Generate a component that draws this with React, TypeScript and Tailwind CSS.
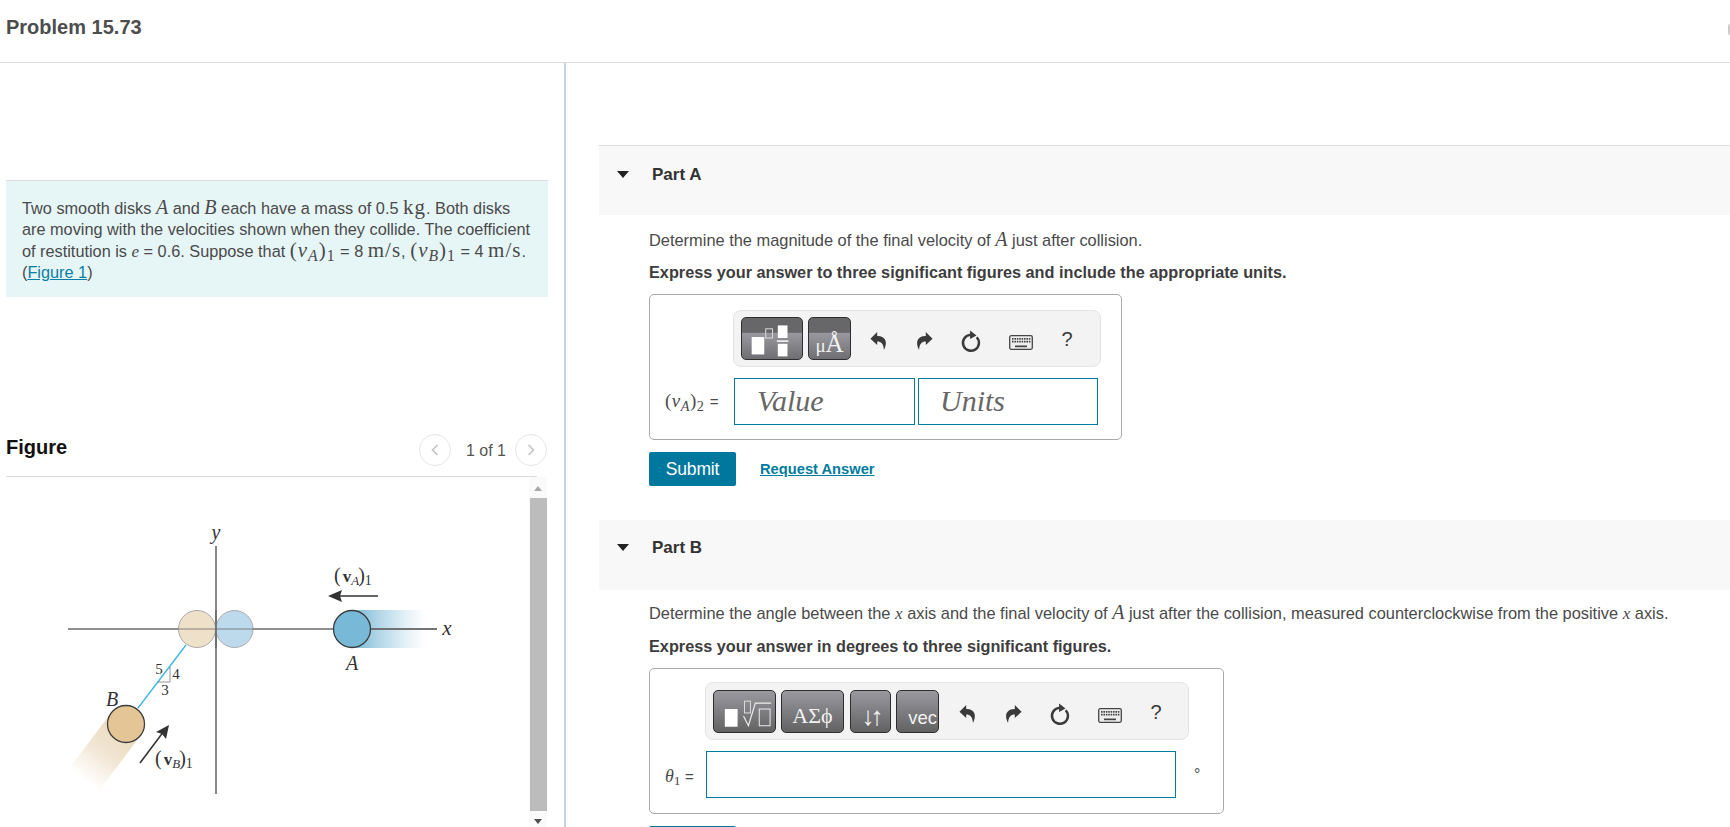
import React from "react";

const serif = "font-['Liberation_Serif',serif]";

function Undo({ flip = false }: { flip?: boolean }) {
  return (
    <svg viewBox="0 0 20 22" className={`w-[18px] h-[20px] ${flip ? "-scale-x-100" : ""}`}>
      <path d="M8 1 L0.5 8.5 L8 15.5 V11.5 C12.5 11.5 15 14 15.5 21 C19.5 14 18.5 5.5 8 5.5 Z" fill="#3a3a3a" />
    </svg>
  );
}

function Reset() {
  return (
    <svg viewBox="0 0 24 26" className="w-[22px] h-[24px]">
      <path d="M11 6.3 A8.7 8.7 0 1 0 18.2 8.9" fill="none" stroke="#3a3a3a" strokeWidth="2.7" />
      <path d="M11 1.5 L18 7 L11 10.8 Z" fill="#3a3a3a" />
    </svg>
  );
}

function Keyboard() {
  const keys: React.ReactNode[] = [];
  for (let r = 0; r < 2; r++) {
    for (let c = 0; c < 8; c++) {
      keys.push(<rect key={`${r}-${c}`} x={3 + c * 2.4} y={3 + r * 2.8} width="1.6" height="1.7" fill="#444" />);
    }
  }
  return (
    <svg viewBox="0 0 24 15" className="w-[24px] h-[15px]">
      <rect x="0.7" y="0.7" width="22.6" height="13.6" rx="1.5" fill="#eee" stroke="#444" strokeWidth="1.3" />
      {keys}
      <rect x="6" y="10.5" width="12" height="1.7" fill="#444" />
    </svg>
  );
}

function Tools() {
  return (
    <div className="flex items-center gap-x-[27px] pt-[5px]">
      <Undo />
      <Undo flip />
      <Reset />
      <span className="pt-[3px]"><Keyboard /></span>
      <span className="text-[20px] leading-[20px] -mt-[4px] text-[#3a3a3a] w-[14px] text-center">?</span>
    </div>
  );
}

function Triangle() {
  return <span className="block w-0 h-0 border-x-[6px] border-x-transparent border-t-[7px] border-t-[#222]" />;
}

function PartHeader({ name, className }: { name: string; className: string }) {
  return (
    <div className={`h-[70px] bg-[#f8f8f8] flex items-start pl-[18px] gap-[23px] ${className}`}>
      <span className="mt-[6px]"><Triangle /></span>
      <span className="text-[17px] font-bold text-[#333] leading-[20px]">{name}</span>
    </div>
  );
}

const darkBtn = "rounded-[5px] border border-[#2e2e2e] h-[43px] overflow-hidden flex items-end justify-center shrink-0";
const splitBg = "bg-[linear-gradient(to_bottom,#67676a_0%,#67676a_35%,#99989e_37%,#6f6f73_100%)]";
const fadeBg = "bg-[linear-gradient(to_bottom,#9a99a0_0%,#626262_100%)]";
const body = "text-[16.4px] leading-[20px]";
const bold = "text-[16.25px] leading-[20px] font-bold text-[#3d3d3d]";
const math = `${serif} text-[20px] leading-[20px]`;
const mathWide = `${serif} text-[21px] leading-[20px] tracking-[1px]`;

function Figure() {
  return (
    <svg viewBox="6 477 523 350" className="w-[523px] h-[350px] shrink-0">
      <defs>
        <linearGradient id="sa" x1="0" x2="1" y1="0" y2="0">
          <stop offset="0" stopColor="#74b6d4" />
          <stop offset="0.35" stopColor="#b0d5e7" />
          <stop offset="0.75" stopColor="#e6f2f8" />
          <stop offset="1" stopColor="#ffffff" />
        </linearGradient>
        <linearGradient id="sb" gradientUnits="userSpaceOnUse" x1="126" y1="724" x2="84" y2="780">
          <stop offset="0" stopColor="#ead8bb" />
          <stop offset="0.5" stopColor="#f1e5d2" />
          <stop offset="1" stopColor="#ffffff" />
        </linearGradient>
      </defs>
      <rect x="352" y="610" width="73" height="38" fill="url(#sa)" />
      <polygon points="111,713 141,735 98,792 68,770" fill="url(#sb)" />
      <line x1="68" y1="629" x2="437" y2="629" stroke="#6b6b6b" strokeWidth="1.6" />
      <line x1="216" y1="546" x2="216" y2="794" stroke="#6b6b6b" strokeWidth="1.6" />
      <ellipse cx="197" cy="629" rx="18.5" ry="18.5" fill="#eeddc6" fillOpacity="0.92" stroke="#aaa" />
      <ellipse cx="234.5" cy="629" rx="18.5" ry="18.5" fill="#b7d7ea" fillOpacity="0.92" stroke="#aaa" />
      <line x1="178" y1="629" x2="254" y2="629" stroke="#6b6b6b" strokeWidth="1.2" opacity="0.7" />
      <line x1="216" y1="610" x2="216" y2="648" stroke="#6b6b6b" strokeWidth="1.6" />
      <circle cx="352" cy="629" r="18.5" fill="#77b9d6" stroke="#3b3b3b" strokeWidth="1.3" />
      <line x1="371" y1="629" x2="437" y2="629" stroke="#6b6b6b" strokeWidth="1.6" />
      <line x1="186" y1="645" x2="138" y2="708" stroke="#3fb8e8" strokeWidth="1.4" />
      <path d="M170 667 V682 H158" fill="none" stroke="#777" strokeWidth="0.8" />
      <circle cx="126" cy="724" r="18.5" fill="#e4c596" stroke="#3b3b3b" strokeWidth="1.3" />
      <line x1="378" y1="596" x2="336" y2="596" stroke="#333" strokeWidth="1.6" />
      <path d="M328 596 L342 590 L340 596 L342 602 Z" fill="#333" />
      <line x1="140" y1="763" x2="164" y2="731" stroke="#333" strokeWidth="1.6" />
      <path d="M169 725 L166 739 L162 734 L156 732 Z" fill="#333" />
      <g className={serif} fill="#333" fontSize="20">
        <text x="216" y="539" textAnchor="middle" fontStyle="italic">y</text>
        <text x="447" y="635" textAnchor="middle" fontStyle="italic" fontSize="21">x</text>
        <text x="352" y="670" textAnchor="middle" fontStyle="italic" fontSize="20">A</text>
        <text x="112" y="706" textAnchor="middle" fontStyle="italic" fontSize="20">B</text>
        <text x="159" y="674" textAnchor="middle" fontSize="15">5</text>
        <text x="176" y="679" textAnchor="middle" fontSize="15">4</text>
        <text x="165" y="695" textAnchor="middle" fontSize="15">3</text>
        <text x="334" y="582">(<tspan fontWeight="bold" dx="2" fontSize="17">v</tspan><tspan fontStyle="italic" fontSize="13" dy="3">A</tspan><tspan dy="-3" dx="-1">)</tspan><tspan fontSize="14" dy="3">1</tspan></text>
        <text x="155" y="765">(<tspan fontWeight="bold" dx="2" fontSize="17">v</tspan><tspan fontStyle="italic" fontSize="13" dy="3">B</tspan><tspan dy="-3" dx="-1">)</tspan><tspan fontSize="14" dy="3">1</tspan></text>
      </g>
    </svg>
  );
}

export default function App() {
  return (
    <div className="w-[1730px] h-[827px] bg-white overflow-hidden font-['Liberation_Sans',Arial,sans-serif] text-[#4a4a4a] flex flex-col relative">
      <header className="h-[63px] shrink-0 border-b border-[#dcdcdc] pl-[6px] pt-[15px]">
        <h1 className="text-[20px] font-bold leading-[24px] text-[#4d4d4d]">Problem 15.73</h1>
      </header>
      <span className="absolute right-0 top-[24px] w-[2px] h-[11px] bg-[#ccc] rounded-l-full" />

      <main className="flex flex-1 min-h-0">
        <section className="w-[566px] shrink-0 border-r-2 border-[#c3d5e6] flex flex-col">
          <div className="mt-[117px] ml-[6px] w-[542px] h-[117px] bg-[#e6f5f6] border-t border-[#dcdcdc] pl-[16px] pt-[16px] text-[16.3px] leading-[21px] whitespace-nowrap">
            <p>
              Two smooth disks <i className={math}>A</i> and <i className={math}>B</i> each have a mass of 0.5 <span className={mathWide}>kg</span>. Both disks
              <br />
              are moving with the velocities shown when they collide. The coefficient
              <br />
              of restitution is <i className={`${serif} text-[17px] leading-[20px]`}>e</i> = 0.6. Suppose that <span className={mathWide}>(<i>v<sub>A</sub></i>)<sub>1</sub></span> = 8 <span className={mathWide}>m/s</span>, <span className={mathWide}>(<i>v<sub>B</sub></i>)<sub>1</sub></span> = 4 <span className={mathWide}>m/s</span>.
              <br />
              (<a className="text-[#0a7ea4] underline">Figure 1</a>)
            </p>
          </div>

          <div className="mt-[131px] ml-[6px] w-[531px] h-[49px] border-b border-[#dcdcdc] flex items-start justify-between">
            <h2 className="text-[20px] font-bold text-[#111] leading-[24px] mt-[7px]">Figure</h2>
            <div className="flex items-center mt-[6px] mr-[-10px] text-[16px] text-[#555]">
              <span className="w-[32px] h-[32px] rounded-full border border-[#e6e6e6] flex items-center justify-center text-[#c4c4c4]">
                <svg viewBox="0 0 12 16" className="w-[10px] h-[14px]"><path d="M9 2 L3 8 L9 14" fill="none" stroke="currentColor" strokeWidth="2" /></svg>
              </span>
              <span className="ml-[15px] mr-[9px] pt-[2px]">1 of 1</span>
              <span className="w-[32px] h-[32px] rounded-full border border-[#e6e6e6] flex items-center justify-center text-[#c4c4c4]">
                <svg viewBox="0 0 12 16" className="w-[10px] h-[14px]"><path d="M3 2 L9 8 L3 14" fill="none" stroke="currentColor" strokeWidth="2" /></svg>
              </span>
            </div>
          </div>

          <div className="flex flex-1 min-h-0 ml-[6px] w-[541px]">
            <Figure />
            <div className="w-[18px] flex flex-col items-center bg-[#fafafa]">
              <span className="mt-[9px] block w-0 h-0 border-x-[4px] border-x-transparent border-b-[5px] border-b-[#a8a8a8]" />
              <span className="mt-[7px] w-[17px] h-[313px] bg-[#bcbcbc]" />
              <span className="mt-[8px] block w-0 h-0 border-x-[4px] border-x-transparent border-t-[5px] border-t-[#505050]" />
            </div>
          </div>
        </section>

        <section className="flex-1 min-w-0 pl-[33px] pt-[82px]">
          <PartHeader name="Part A" className="border-t border-[#dcdcdc] pt-[19px]" />

          <div className="pl-[50px]">
            <p className={`mt-[14px] ${body} whitespace-nowrap`}>
              Determine the magnitude of the final velocity of <i className={math}>A</i> just after collision.
            </p>
            <p className={`mt-[12px] ${bold} whitespace-nowrap`}>
              Express your answer to three significant figures and include the appropriate units.
            </p>

            <div className="mt-[12px] w-[473px] h-[146px] border border-[#aaa] rounded-[5px] pt-[15px] pl-[15px]">
              <div className="ml-[68px] w-[368px] h-[57px] bg-[#f3f3f3] border border-[#e3e3e3] rounded-[8px] flex items-center pl-[7px]">
                <div className={`${darkBtn} ${splitBg} w-[62px]`}>
                  <svg viewBox="0 0 62 43" className="w-[62px] h-[43px]">
                    <rect x="10" y="21" width="13" height="18" fill="#fff" />
                    <rect x="24.5" y="12.5" width="7" height="9.5" fill="none" stroke="#ddd" />
                    <rect x="37" y="9" width="10" height="13" fill="#fff" />
                    <rect x="36" y="24.5" width="12" height="1.5" fill="#fff" />
                    <rect x="37" y="28" width="10" height="13" fill="#fff" />
                  </svg>
                </div>
                <div className={`${darkBtn} ${splitBg} w-[43px] ml-[5px] text-[#f2f2f2] ${serif} text-[25px] leading-[27px]`}>
                  <span><span className="text-[19px]">μ</span>Å</span>
                </div>
                <div className="ml-[19px]"><Tools /></div>
              </div>
              <div className="flex items-center mt-[11px]">
                <span className={`${serif} text-[19px] tracking-[0.5px] w-[69px] whitespace-nowrap`}>(<i>v<sub>A</sub></i>)<sub>2</sub> <span className="font-['Liberation_Sans',sans-serif] text-[15px]">=</span></span>
                <span className={`w-[181px] h-[47px] border border-[#007c9e] pl-[22px] pb-[2px] flex items-center ${serif} italic text-[30px] text-[#666]`}>Value</span>
                <span className={`w-[180px] h-[47px] ml-[3px] border border-[#007c9e] pl-[21px] pb-[2px] flex items-center ${serif} italic text-[30px] text-[#666]`}>Units</span>
              </div>
            </div>

            <div className="mt-[12px] flex items-center">
              <span className="w-[87px] h-[34px] rounded-[2px] bg-[#00789d] text-white text-[17.5px] flex items-center justify-center tracking-[-0.2px]">Submit</span>
              <a className="ml-[24px] text-[14.7px] font-bold underline text-[#007c9e]">Request Answer</a>
            </div>
          </div>

          <PartHeader name="Part B" className="mt-[34px] pt-[18px]" />

          <div className="pl-[50px]">
            <p className={`mt-[12px] ${body} whitespace-nowrap`}>
              Determine the angle between the <i className={`${serif} text-[17px]`}>x</i> axis and the final velocity of <i className={math}>A</i> just after the collision, measured counterclockwise from the positive <i className={`${serif} text-[17px]`}>x</i> axis.
            </p>
            <p className={`mt-[12px] ${bold} whitespace-nowrap`}>
              Express your answer in degrees to three significant figures.
            </p>

            <div className="mt-[12px] w-[575px] h-[146px] border border-[#aaa] rounded-[5px] pt-[13px] pl-[55px]">
              <div className="w-[484px] h-[58px] bg-[#f3f3f3] border border-[#e3e3e3] rounded-[8px] flex items-center pl-[7px]">
                <div className={`${darkBtn} ${fadeBg} w-[63px]`}>
                  <svg viewBox="0 0 62 43" className="w-[62px] h-[43px]">
                    <rect x="11" y="20" width="13" height="18" fill="#fff" />
                    <rect x="31" y="12" width="6" height="12" fill="none" stroke="#ddd" />
                    <path d="M30 27 L35 37 L42 14 H58" fill="none" stroke="#eee" strokeWidth="1.2" />
                    <rect x="46" y="20" width="11" height="17" fill="none" stroke="#eee" />
                  </svg>
                </div>
                <div className={`${darkBtn} ${fadeBg} w-[63px] ml-[5px] items-center text-[#f2f2f2] ${serif} text-[22px]`}>ΑΣϕ</div>
                <div className={`${darkBtn} ${fadeBg} w-[41px] ml-[6px] text-[#f2f2f2] ${serif} text-[26px] leading-[30px] tracking-[-4px]`}>↓↑</div>
                <div className={`${darkBtn} ${fadeBg} w-[43px] ml-[5px] items-center justify-end text-[#f2f2f2] text-[18.5px] pt-[4px] pr-[1px]`}>vec</div>
                <div className="ml-[20px]"><Tools /></div>
              </div>
              <div className="flex items-center mt-[11px] -ml-[40px]">
                <span className={`${serif} text-[18px] w-[41px] whitespace-nowrap pt-[4px]`}><i>θ</i><sub>1</sub> <span className="font-['Liberation_Sans',sans-serif] text-[15px]">=</span></span>
                <span className="w-[470px] h-[47px] border border-[#007c9e]" />
                <span className="ml-[18px] text-[16px] text-[#555]">°</span>
              </div>
            </div>
            <div className="mt-[12px] w-[87px] h-[34px] rounded-[2px] bg-[#00789d]" />
          </div>
        </section>
      </main>
    </div>
  );
}
